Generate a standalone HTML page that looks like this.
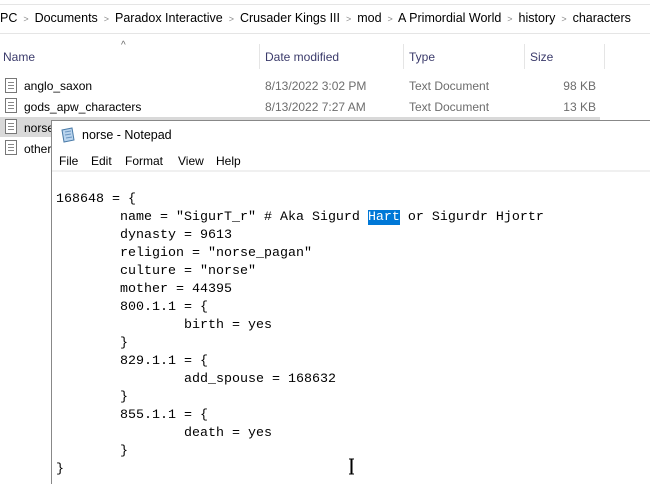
<!DOCTYPE html>
<html><head><meta charset="utf-8"><style>
*{margin:0;padding:0;box-sizing:border-box}
body{width:650px;height:484px;overflow:hidden;background:#fff;font-family:"Liberation Sans",sans-serif;font-size:12px;color:#000;position:relative}
.a{position:absolute;white-space:nowrap}
.sep{color:#888;font-size:9px}
.doc{position:absolute;width:12px;height:15px;border:1px solid #777;background:#fff}
.doc i{position:absolute;left:2px;width:6px;height:1px;background:#888}
.code{position:absolute;left:56px;top:191px;font-family:"Liberation Mono",monospace;font-size:13.33px;line-height:18px;white-space:pre;color:#000}
.hl{background:#0078d7;color:#fff}
</style></head><body>
<div class="a" style="left:0;top:4px;width:650px;height:1px;background:#e5e5e5"></div>
<div class="a" style="left:0;top:33px;width:650px;height:1px;background:#e5e5e5"></div>
<div class="a" style="left:0;top:11px;font-size:12.5px">PC <span class="sep">&nbsp;&gt;&nbsp;</span> Documents <span class="sep">&nbsp;&gt;&nbsp;</span> Paradox Interactive <span class="sep">&nbsp;&gt;&nbsp;</span> Crusader Kings III <span class="sep">&nbsp;&gt;&nbsp;</span> mod <span class="sep">&nbsp;&gt;&nbsp;</span> A Primordial World <span class="sep">&nbsp;&gt;&nbsp;</span> history <span class="sep">&nbsp;&gt;&nbsp;</span> characters</div>
<div class="a" style="left:121px;top:40px;font-size:10px;color:#666">^</div>
<div class="a" style="left:3px;top:50px;color:#3b3b6b">Name</div>
<div class="a" style="left:259px;top:44px;width:1px;height:25px;background:#e5e5e5"></div>
<div class="a" style="left:265px;top:50px;color:#3b3b6b">Date modified</div>
<div class="a" style="left:403px;top:44px;width:1px;height:25px;background:#e5e5e5"></div>
<div class="a" style="left:409px;top:50px;color:#3b3b6b">Type</div>
<div class="a" style="left:524px;top:44px;width:1px;height:25px;background:#e5e5e5"></div>
<div class="a" style="left:530px;top:50px;color:#3b3b6b">Size</div>
<div class="a" style="left:604px;top:44px;width:1px;height:25px;background:#e5e5e5"></div>
<div class="a" style="left:0;top:117px;width:600px;height:20px;background:#d9d9d9"></div>
<div class="doc" style="left:5px;top:78px"><i style="top:3px"></i><i style="top:6px"></i><i style="top:9px"></i></div>
<div class="doc" style="left:5px;top:98px"><i style="top:3px"></i><i style="top:6px"></i><i style="top:9px"></i></div>
<div class="doc" style="left:5px;top:119px"><i style="top:3px"></i><i style="top:6px"></i><i style="top:9px"></i></div>
<div class="doc" style="left:5px;top:140px"><i style="top:3px"></i><i style="top:6px"></i><i style="top:9px"></i></div>
<div class="a" style="left:24px;top:79px">anglo_saxon</div>
<div class="a" style="left:24px;top:100px">gods_apw_characters</div>
<div class="a" style="left:24px;top:121px">norse</div>
<div class="a" style="left:24px;top:142px">other</div>
<div class="a" style="left:265px;top:79px;color:#6d6d6d">8/13/2022 3:02 PM</div>
<div class="a" style="left:265px;top:100px;color:#6d6d6d">8/13/2022 7:27 AM</div>
<div class="a" style="left:409px;top:79px;color:#6d6d6d">Text Document</div>
<div class="a" style="left:409px;top:100px;color:#6d6d6d">Text Document</div>
<div class="a" style="left:560px;top:79px;width:36px;text-align:right;color:#6d6d6d">98 KB</div>
<div class="a" style="left:560px;top:100px;width:36px;text-align:right;color:#6d6d6d">13 KB</div>
<!-- notepad -->
<div class="a" style="left:51px;top:120px;width:600px;height:364px;background:#fff;border-left:1px solid #888;border-top:1px solid #888"></div>
<svg class="a" style="left:60px;top:127px" width="16" height="16" viewBox="0 0 16 16"><path d="M2 3 L12 1 L14 13 L4 15 Z" fill="#b9d4ee" stroke="#4a7ba8"/><path d="M5 5l6-1M5 8l6-1M6 11l6-1" stroke="#6a95c0"/></svg>
<div class="a" style="left:82px;top:128px;font-size:12.5px">norse - Notepad</div>
<div class="a" style="left:59px;top:154px">File</div>
<div class="a" style="left:91px;top:154px">Edit</div>
<div class="a" style="left:125px;top:154px">Format</div>
<div class="a" style="left:178px;top:154px">View</div>
<div class="a" style="left:216px;top:154px">Help</div>
<div class="a" style="left:52px;top:170px;width:600px;height:2px;background:#f0f0f0"></div>
<div class="code">168648 = {
        name = "SigurT_r" # Aka Sigurd <span class="hl">Hart</span> or Sigurdr Hjortr
        dynasty = 9613
        religion = "norse_pagan"
        culture = "norse"
        mother = 44395
        800.1.1 = {
                birth = yes
        }
        829.1.1 = {
                add_spouse = 168632
        }
        855.1.1 = {
                death = yes
        }
}</div>
<svg class="a" style="left:348px;top:458px" width="9" height="18" viewBox="0 0 9 18"><path d="M1 1h2v15H1M6 1H4v15h2M3 1v15" stroke="#000" fill="none"/></svg>
</body></html>
